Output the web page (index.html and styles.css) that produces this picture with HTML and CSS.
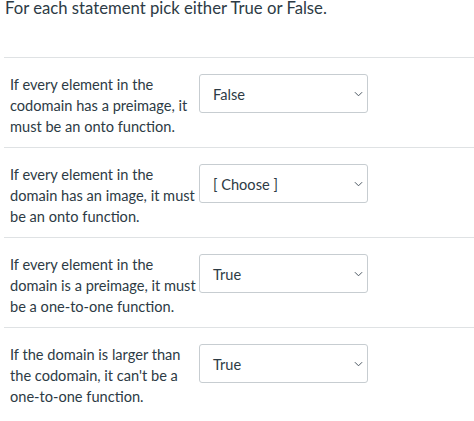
FILE: index.html
```html
<!DOCTYPE html>
<html>
<head>
<meta charset="utf-8">
<link rel="stylesheet" href="styles.css">
</head>
<body>
<div class="quiz">
  <p class="title">For each statement pick either True or False.</p>
  <div class="rows">
    <div class="row">
      <div class="statement">If every element in the codomain has a preimage, it must be an onto function.</div>
      <div class="select"><span>False</span><svg class="chev" viewBox="0 0 10 6" width="9" height="6"><path d="M1 1 L5 5 L9 1" fill="none" stroke="#4a5660" stroke-width="1.1"/></svg></div>
    </div>
    <div class="row">
      <div class="statement">If every element in the domain has an image, it must be an onto function.</div>
      <div class="select"><span>[ Choose ]</span><svg class="chev" viewBox="0 0 10 6" width="9" height="6"><path d="M1 1 L5 5 L9 1" fill="none" stroke="#4a5660" stroke-width="1.1"/></svg></div>
    </div>
    <div class="row">
      <div class="statement">If every element in the domain is a preimage, it must be a one-to-one function.</div>
      <div class="select"><span>True</span><svg class="chev" viewBox="0 0 10 6" width="9" height="6"><path d="M1 1 L5 5 L9 1" fill="none" stroke="#4a5660" stroke-width="1.1"/></svg></div>
    </div>
    <div class="row">
      <div class="statement">If the domain is larger than the codomain, it can't be a one-to-one function.</div>
      <div class="select"><span>True</span><svg class="chev" viewBox="0 0 10 6" width="9" height="6"><path d="M1 1 L5 5 L9 1" fill="none" stroke="#4a5660" stroke-width="1.1"/></svg></div>
    </div>
  </div>
</div>
</body>
</html>
```

FILE: styles.css
```css
html, body {
  margin: 0;
  padding: 0;
  background: #ffffff;
}
body {
  font-family: Lato, "Open Sans", sans-serif;
  color: #2d3b45;
}
.quiz {
  padding-left: 4px;
}
.title {
  margin: -1px 0 0 0;
  padding-left: 1px;
  font-size: 16.7px;
  line-height: 18px;
  height: 58px;
  border-bottom: 1px solid #dfe2e4;
}
.row {
  display: flex;
  align-items: flex-start;
  padding: 16px 0 10px 6px;
  border-bottom: 1px solid #dfe2e4;
}
.row:last-child {
  border-bottom: none;
}
.statement {
  width: 189px;
  font-size: 14.6px;
  line-height: 21px;
}
.select {
  box-sizing: border-box;
  width: 169px;
  height: 39px;
  border: 1px solid #c7cdd1;
  border-radius: 3px;
  display: flex;
  align-items: center;
  justify-content: space-between;
  padding: 0 4px 0 13px;
  font-size: 14.6px;
}
.select span {
  margin-top: 1px;
}
.chev {
  display: block;
}
```
